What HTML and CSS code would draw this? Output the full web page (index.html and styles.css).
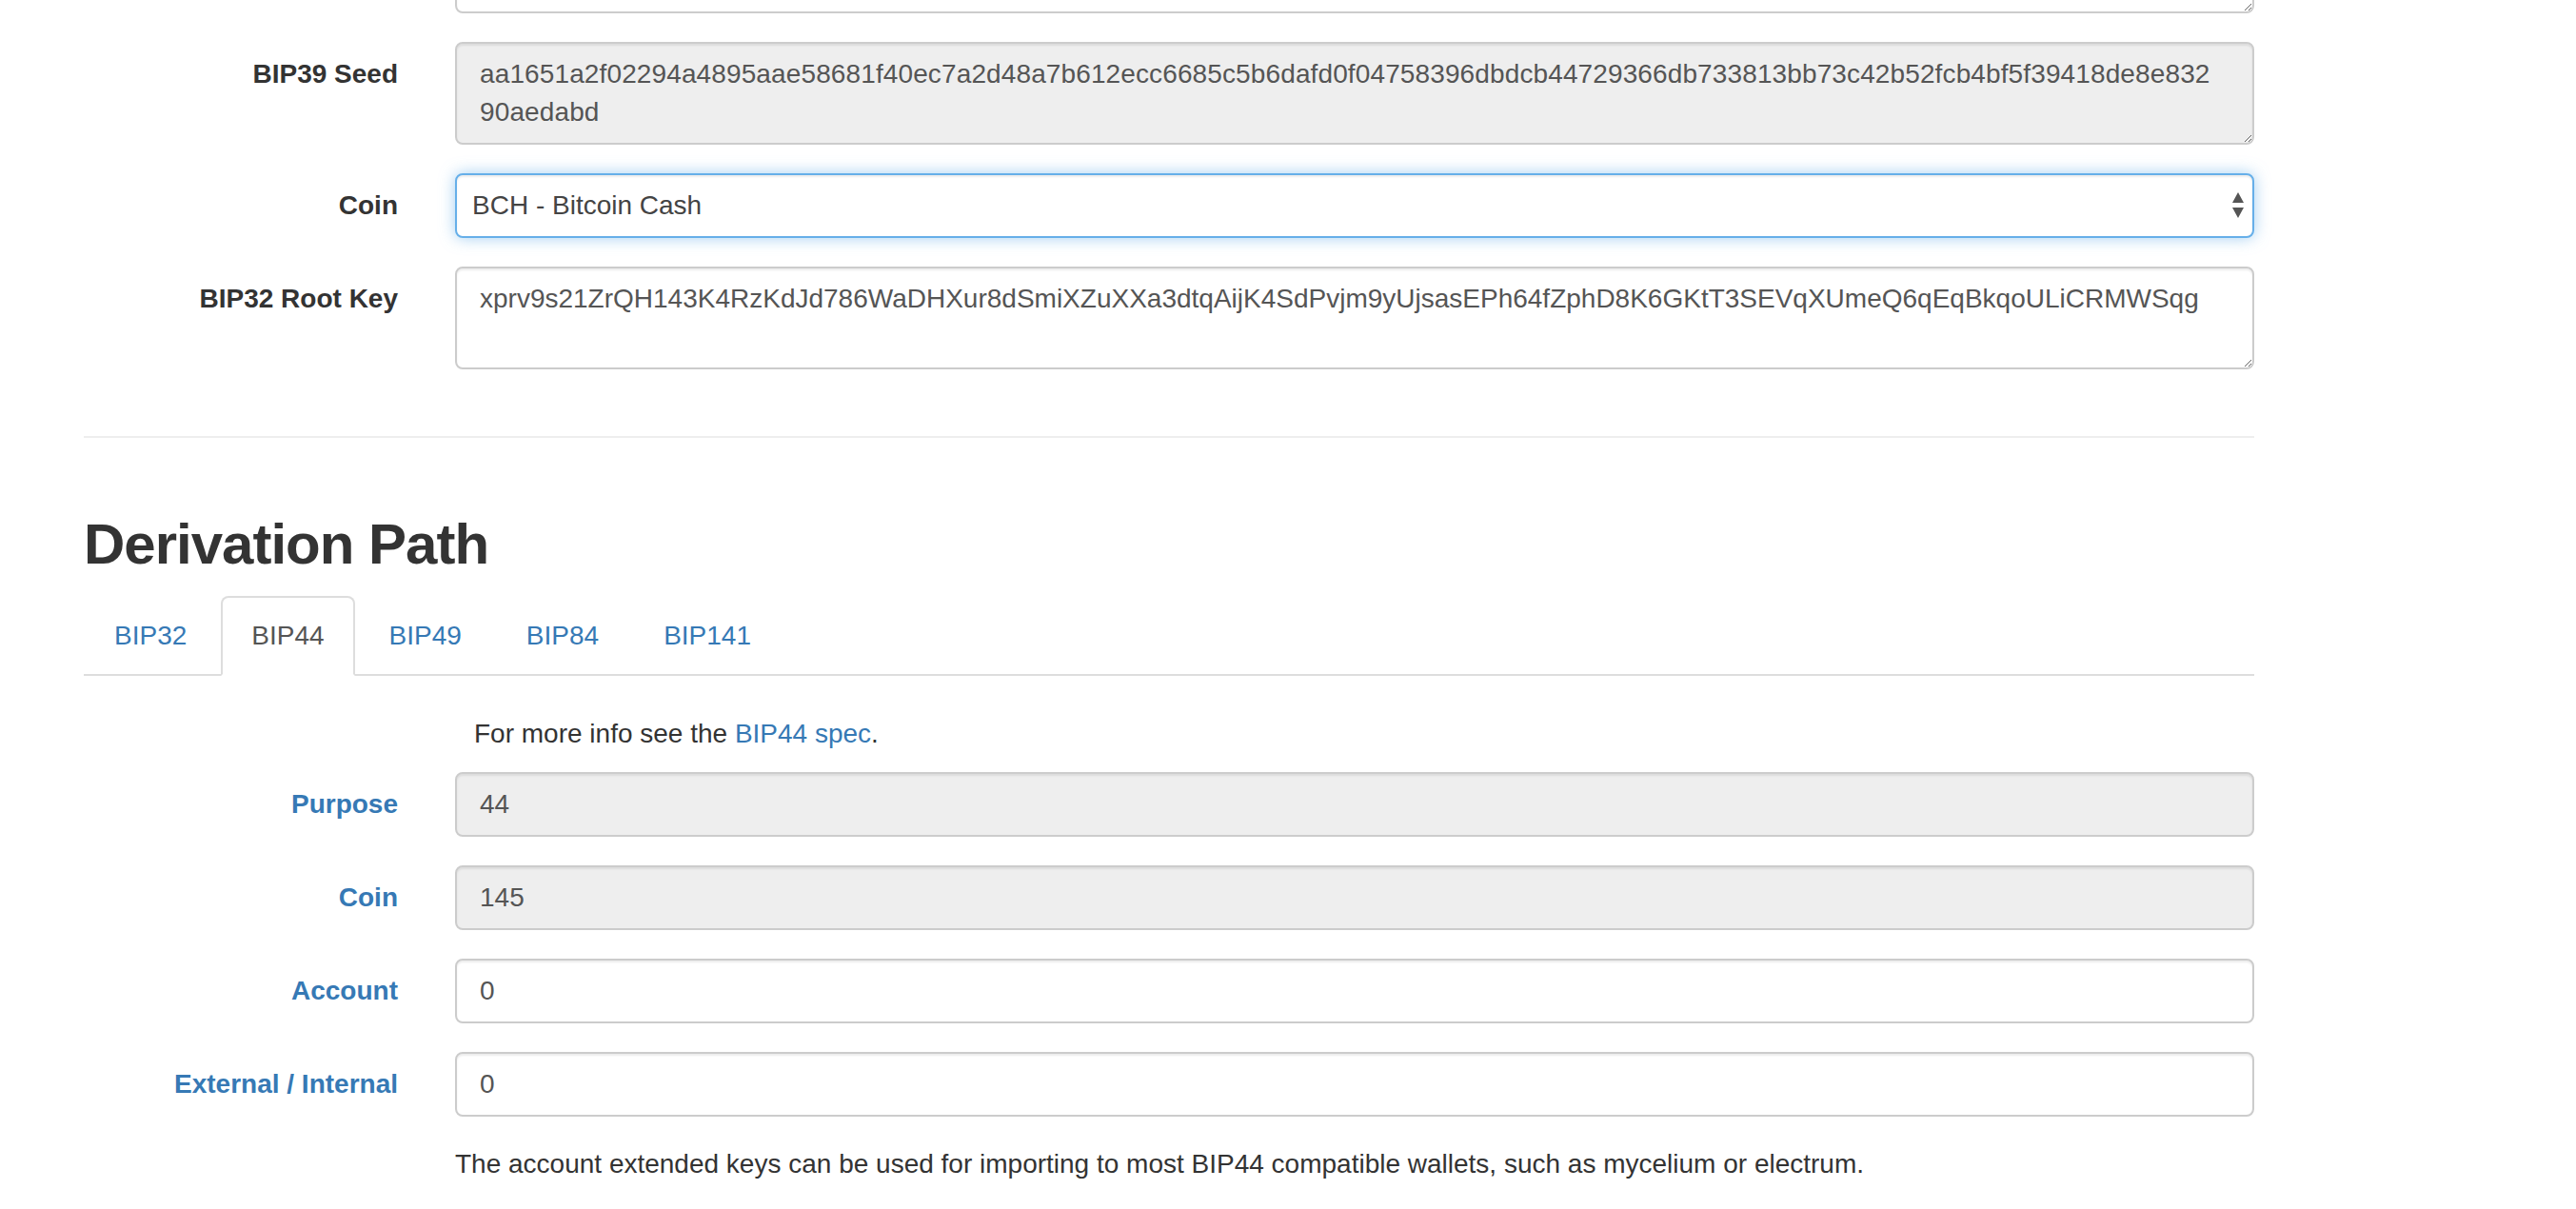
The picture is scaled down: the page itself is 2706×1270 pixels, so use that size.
FILE: index.html
```html
<!DOCTYPE html>
<html lang="en">
<head>
<meta charset="utf-8">
<title>BIP39 - Derivation Path</title>
<link rel="stylesheet" href="styles.css">
</head>
<body>
<div class="container">
  <form class="form">
    <div class="row row-cut">
      <div class="label"></div>
      <textarea class="control area" rows="2" readonly></textarea>
    </div>
    <div class="row">
      <label class="label">BIP39 Seed</label>
      <textarea class="control area readonly seed" rows="2" readonly>aa1651a2f02294a4895aae58681f40ec7a2d48a7b612ecc6685c5b6dafd0f04758396dbdcb44729366db733813bb73c42b52fcb4bf5f39418de8e83290aedabd</textarea>
    </div>
    <div class="row">
      <label class="label">Coin</label>
      <div class="select-wrap">
        <select class="control select focus">
          <option>BCH - Bitcoin Cash</option>
        </select>
        <svg class="select-arrows" width="14" height="28" viewBox="0 0 14 28"><path d="M7 0 L13 11 L1 11 Z M1 16 L13 16 L7 27 Z" fill="#555"/></svg>
      </div>
    </div>
    <div class="row">
      <label class="label">BIP32 Root Key</label>
      <textarea class="control area" rows="2" readonly>xprv9s21ZrQH143K4RzKdJd786WaDHXur8dSmiXZuXXa3dtqAijK4SdPvjm9yUjsasEPh64fZphD8K6GKtT3SEVqXUmeQ6qEqBkqoULiCRMWSqg</textarea>
    </div>
  </form>

  <hr class="rule">

  <h2 class="title">Derivation Path</h2>

  <ul class="tabs">
    <li class="tab"><a href="#">BIP32</a></li>
    <li class="tab active"><a href="#">BIP44</a></li>
    <li class="tab"><a href="#">BIP49</a></li>
    <li class="tab"><a href="#">BIP84</a></li>
    <li class="tab"><a href="#">BIP141</a></li>
  </ul>

  <div class="tab-content">
    <div class="row">
      <div class="label"></div>
      <p class="info">For more info see the <a href="#">BIP44 spec</a>.</p>
    </div>
    <div class="row">
      <label class="label link-label"><a href="#">Purpose</a></label>
      <input class="control input readonly" type="text" value="44" readonly>
    </div>
    <div class="row">
      <label class="label link-label"><a href="#">Coin</a></label>
      <input class="control input readonly" type="text" value="145" readonly>
    </div>
    <div class="row">
      <label class="label link-label"><a href="#">Account</a></label>
      <input class="control input" type="text" value="0">
    </div>
    <div class="row">
      <label class="label link-label"><a href="#">External / Internal</a></label>
      <input class="control input" type="text" value="0">
    </div>
    <div class="row">
      <div class="label"></div>
      <p class="note">The account extended keys can be used for importing to most BIP44 compatible wallets, such as mycelium or electrum.</p>
    </div>
  </div>
</div>
</body>
</html>
```

FILE: styles.css
```css
* {
  box-sizing: border-box;
}

html, body {
  margin: 0;
  padding: 0;
  background: #fff;
}

body {
  font-family: "Liberation Sans", Arial, Helvetica, sans-serif;
  font-size: 28px;
  line-height: 40px;
  color: #333;
}

a {
  color: #3679b5;
  text-decoration: none;
}

.container {
  padding-left: 88px;
  width: 2368px;
}

.form {
  margin: 0;
  display: flow-root;
}

.row {
  display: grid;
  grid-template-columns: 330px 1890px;
  column-gap: 60px;
  margin-bottom: 30px;
}

.row-cut {
  margin-top: -94px;
}

.label {
  display: block;
  text-align: right;
  font-weight: bold;
  padding-top: 14px;
  color: #333;
}

.link-label a {
  color: #3679b5;
}

.control {
  display: block;
  width: 1890px;
  margin: 0;
  font-family: "Liberation Sans", Arial, Helvetica, sans-serif;
  font-size: 28px;
  line-height: 40px;
  color: #555;
  background: #fff;
  border: 2px solid #ccc;
  border-radius: 8px;
  box-shadow: inset 0 2px 2px rgba(0, 0, 0, 0.075);
  outline: none;
}

.area {
  height: 108px;
  padding: 12px 24px;
  resize: vertical;
  overflow: hidden;
}

.seed {
  padding-right: 34px;
  letter-spacing: 0.12px;
}

.input {
  height: 68px;
  padding: 12px 24px;
}

.readonly {
  background: #eee;
}

.select-wrap {
  position: relative;
  width: 1890px;
}

.select {
  height: 68px;
  padding: 0 50px 0 16px;
  -webkit-appearance: none;
  appearance: none;
  color: #444;
}

.focus {
  border-color: #66afe9;
  box-shadow: inset 0 2px 2px rgba(0, 0, 0, 0.075), 0 0 16px rgba(102, 175, 233, 0.6);
}

.select-arrows {
  position: absolute;
  right: 10px;
  top: 20px;
  pointer-events: none;
}

.rule {
  margin: 40px 0 0 0;
  border: 0;
  border-top: 2px solid #eee;
  height: 0;
}

.title {
  margin: 79px 0 21px 0;
  font-size: 60px;
  line-height: 66px;
  font-weight: bold;
  letter-spacing: -1px;
  color: #333;
}

.tabs {
  list-style: none;
  margin: 0;
  padding: 0;
  display: flex;
  border-bottom: 2px solid #ddd;
}

.tab {
  margin-bottom: -2px;
  margin-right: 4px;
}

.tab a {
  display: block;
  padding: 20px 30px;
  line-height: 40px;
  border: 2px solid transparent;
  border-radius: 8px 8px 0 0;
  color: #3679b5;
}

.tab.active a {
  color: #555;
  background: #fff;
  border-color: #ddd;
  border-bottom-color: transparent;
}

.tab-content {
  padding-top: 41px;
}

.info {
  margin: 0 0 -10px 0;
  padding-left: 20px;
  color: #333;
}

.note {
  margin: 0;
  color: #333;
}
```
